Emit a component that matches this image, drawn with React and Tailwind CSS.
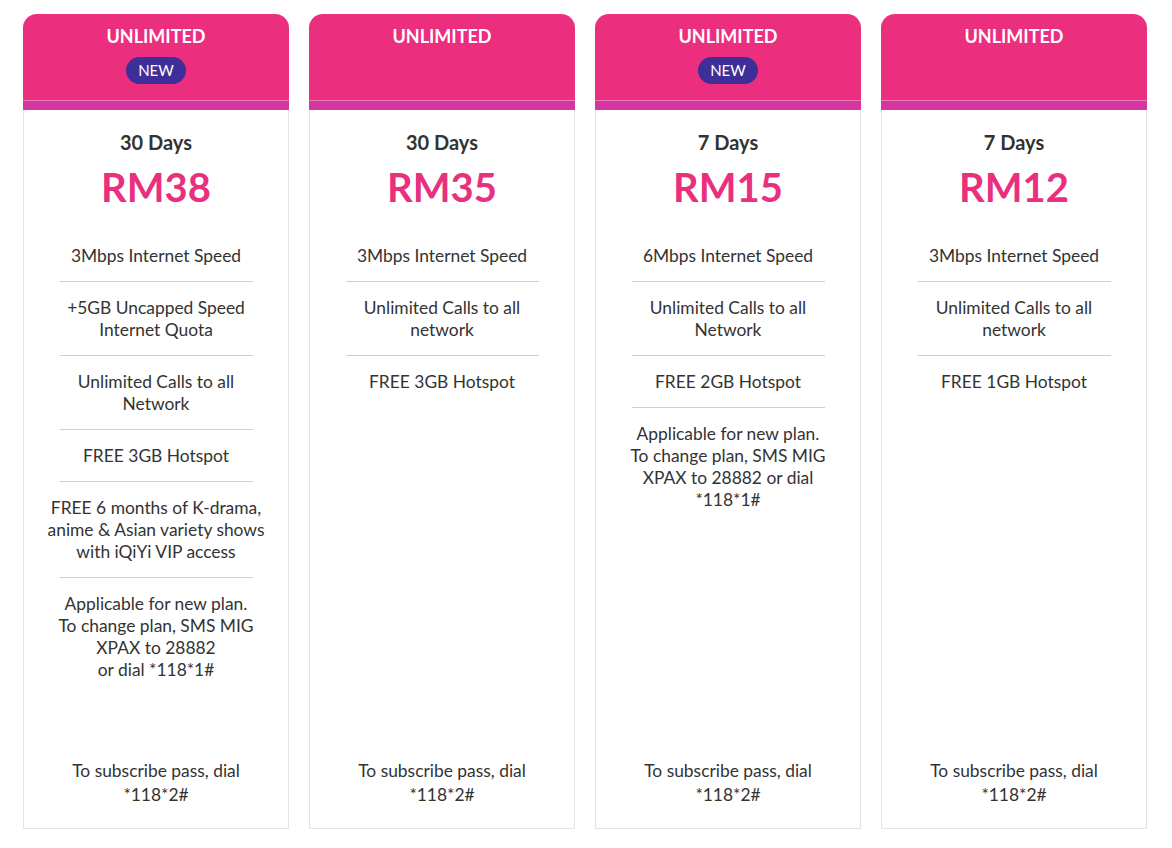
import React from 'react';

const plans = [
  {
    days: '30 Days',
    price: 'RM38',
    isNew: true,
    features: [
      ['3Mbps Internet Speed'],
      ['+5GB Uncapped Speed', 'Internet Quota'],
      ['Unlimited Calls to all', 'Network'],
      ['FREE 3GB Hotspot'],
      ['FREE 6 months of K-drama,', 'anime & Asian variety shows', 'with iQiYi VIP access'],
      ['Applicable for new plan.', 'To change plan, SMS MIG', 'XPAX to 28882', 'or dial *118*1#'],
    ],
  },
  {
    days: '30 Days',
    price: 'RM35',
    isNew: false,
    features: [
      ['3Mbps Internet Speed'],
      ['Unlimited Calls to all', 'network'],
      ['FREE 3GB Hotspot'],
    ],
  },
  {
    days: '7 Days',
    price: 'RM15',
    isNew: true,
    features: [
      ['6Mbps Internet Speed'],
      ['Unlimited Calls to all', 'Network'],
      ['FREE 2GB Hotspot'],
      ['Applicable for new plan.', 'To change plan, SMS MIG', 'XPAX to 28882 or dial', '*118*1#'],
    ],
  },
  {
    days: '7 Days',
    price: 'RM12',
    isNew: false,
    features: [
      ['3Mbps Internet Speed'],
      ['Unlimited Calls to all', 'network'],
      ['FREE 1GB Hotspot'],
    ],
  },
];

const PlanCard = ({ plan }) => {
  return (
    <div className="w-[266px] flex flex-col rounded-t-[14px] overflow-hidden">
      {/* Header */}
      <div className="h-[86px] bg-[#ec2e7f] flex flex-col items-center pt-[11px]">
        <span className="text-white font-bold text-[18px] leading-[22px]">UNLIMITED</span>
        {plan.isNew && (
          <span className="mt-[10px] w-[60px] h-[27px] rounded-full bg-[#3e2e97] text-white text-[15px] flex items-center justify-center">
            NEW
          </span>
        )}
      </div>
      <div className="h-[10px] bg-[#d4369f] border-t border-[#f27cb9]"></div>

      {/* Body */}
      <div className="flex-1 flex flex-col items-center border-x border-b border-[#e3e3e3] pt-[19px] pb-[21px] text-[#333]">
        <div className="text-[20px] leading-[26px] font-bold">{plan.days}</div>
        <div className="mt-[8px] text-[40px] leading-[48px] font-bold text-[#e8307e]">{plan.price}</div>

        <ul className="mt-[19px] w-full flex flex-col items-center">
          {plan.features.map((lines, i) => (
            <li key={i} className="w-full flex flex-col items-center">
              {i > 0 && <div className="w-[193px] h-px bg-[#cfcfcf]"></div>}
              <p className="pt-[15px] pb-[14px] text-[17.4px] leading-[22px] text-center whitespace-nowrap">
                {lines.map((l, j) => (
                  <React.Fragment key={j}>
                    {j > 0 && <br />}
                    {l}
                  </React.Fragment>
                ))}
              </p>
            </li>
          ))}
        </ul>

        <div className="mt-auto pt-[64px] text-[17.4px] leading-[24px] text-center">
          To subscribe pass, dial
          <br />
          *118*2#
        </div>
      </div>
    </div>
  );
};

const App = () => {
  return (
    <div className="min-h-screen bg-white font-['Lato',sans-serif] pt-[14px] pl-[23px]">
      <div className="flex items-stretch gap-[20px]">
        {plans.map((plan, i) => (
          <PlanCard key={i} plan={plan} />
        ))}
      </div>
    </div>
  );
};

export default App;
